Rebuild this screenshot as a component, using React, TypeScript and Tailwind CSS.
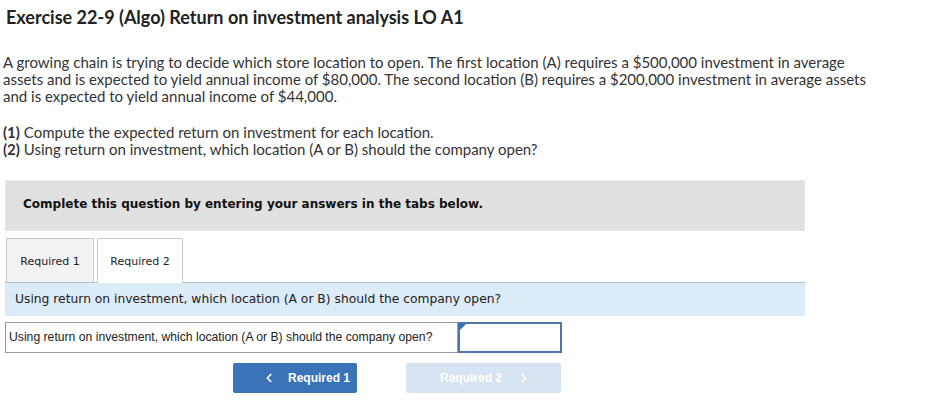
import { ChevronLeft, ChevronRight } from "lucide-react";

const body = { fontFamily: "Lato, 'Open Sans', sans-serif" };
const verdana = { fontFamily: "'DejaVu Sans', Verdana, sans-serif" };
const arial = { fontFamily: "'Liberation Sans', Arial, sans-serif" };

export default function App() {
    return (
        <div className="w-[936px] h-[411px] bg-white text-[#333] overflow-hidden">
            <h1 className="pl-[6px] pt-[6px] text-[18px] font-bold text-[#222] leading-[22px]" style={body}>
                Exercise 22-9 (Algo) Return on investment analysis LO A1
            </h1>

            <p className="pl-[3px] mt-[26px] text-[15px] leading-[17px] text-[#333]" style={body}>
                A growing chain is trying to decide which store location to open. The first location (A) requires a $500,000 investment in average
                <br />
                assets and is expected to yield annual income of $80,000. The second location (B) requires a $200,000 investment in average assets
                <br />
                and is expected to yield annual income of $44,000.
            </p>

            <p className="pl-[3px] mt-[19px] text-[15px] leading-[17px] text-[#333]" style={body}>
                <b>(1)</b> Compute the expected return on investment for each location.
                <br />
                <b>(2)</b> Using return on investment, which location (A or B) should the company open?
            </p>

            <div className="ml-[5px] mt-[22px] w-[800px] h-[51px] bg-[#e0e0e0] border border-[#e8e8e8] flex items-center pl-[17px] pb-[4px]">
                <span className="text-[12px] font-bold text-[#111]" style={verdana}>
                    Complete this question by entering your answers in the tabs below.
                </span>
            </div>

            <div className="ml-[6px] mt-[7px] flex items-end gap-[3px] h-[44px]" style={verdana}>
                <div className="w-[88px] h-[44px] pt-[4px] bg-[#f2f2f2] border border-[#c8c8c8] border-b-0 flex items-center justify-center text-[11px] text-[#222]">
                    Required 1
                </div>
                <div className="w-[86px] h-[45px] -mb-px pt-[4px] pb-px relative z-10 bg-white border border-[#c8c8c8] border-b-0 flex items-center justify-center text-[11px] text-[#222]">
                    Required 2
                </div>
            </div>

            <div className="ml-[5px] w-[800px] h-[34px] bg-[#dcebf8] border-t border-[#bdbdbd] flex items-center pl-[10px]" style={verdana}>
                <span className="text-[12.3px] text-[#222]">
                    Using return on investment, which location (A or B) should the company open?
                </span>
            </div>

            <div className="ml-[5px] mt-[6px] flex w-[557px] h-[31px]" style={arial}>
                <div className="flex-1 border border-[#9a9a9a] flex items-center pl-[3px] text-[12.2px] text-[#222]">
                    Using return on investment, which location (A or B) should the company open?
                </div>
                <div className="relative w-[104px] border-2 border-[#4f74a8] bg-white">
                    <span className="absolute left-0 top-0 w-0 h-0 border-t-[6px] border-r-[6px] border-t-[#2f6fc4] border-r-transparent" />
                </div>
            </div>

            <div className="flex mt-[10px] ml-[233px] gap-[49px]" style={arial}>
                <button className="w-[124px] h-[30px] rounded-[2px] bg-[#3a73b8] text-white text-[12px] font-bold flex items-center pl-[29px] gap-[12px] whitespace-nowrap">
                    <ChevronLeft size={14} strokeWidth={3} />
                    Required 1
                </button>
                <button className="w-[155px] h-[30px] rounded-[2px] bg-[#d7e3f1] text-white text-[12px] font-bold flex items-center pl-[34px] gap-[15px] whitespace-nowrap">
                    Required 2
                    <ChevronRight size={14} strokeWidth={3} />
                </button>
            </div>
        </div>
    );
}
